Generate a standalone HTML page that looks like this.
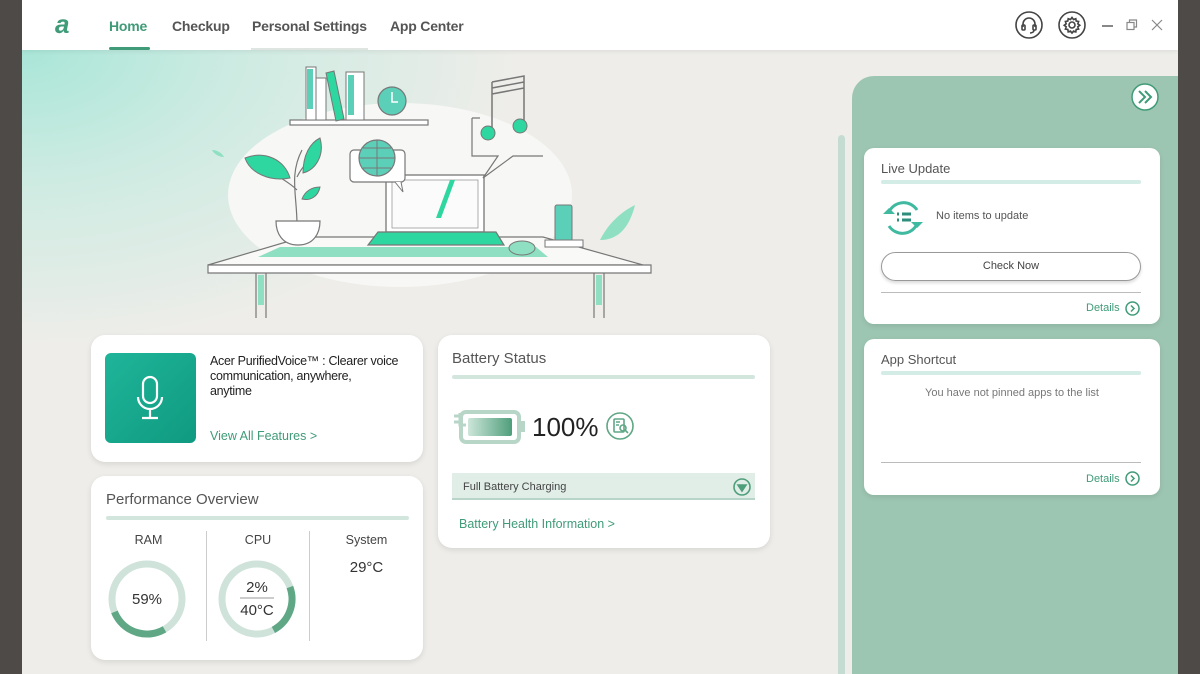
<!DOCTYPE html>
<html><head><meta charset="utf-8"><style>
*{box-sizing:border-box;margin:0;padding:0}
body{width:1200px;height:674px;overflow:hidden;background:#4e4a47;font-family:"Liberation Sans",sans-serif;position:relative}
.app{position:absolute;left:22px;top:0;width:1156px;height:674px;background:#eeede9;overflow:hidden}
.grad{position:absolute;left:0;top:50px;width:500px;height:300px;background:radial-gradient(ellipse at 0 0,#a9e6d8 0%,#cdebe2 30%,rgba(238,237,233,0) 70%)}
.hdr{position:absolute;left:0;top:0;width:1156px;height:50px;background:#fff;box-shadow:0 2px 4px rgba(0,0,0,.06)}
.nav{position:absolute;top:18px;font-size:14px;font-weight:bold;color:#555;letter-spacing:-0.2px}
.card{position:absolute;background:#fff;border-radius:14px;box-shadow:0 2px 6px rgba(0,0,0,.1)}
.ttl{font-size:15px;color:#555}
.bar{height:4px;background:#d3e6de;border-radius:2px}
.lnk{color:#3f9b78;font-size:12.5px}
.side{position:absolute;left:830px;top:76px;width:330px;height:610px;background:#9dc6b2;border-top-left-radius:22px}
</style></head><body>
<div class="app">
<div class="grad"></div>
<div class="hdr">
 <div style="position:absolute;left:33px;top:9px;font-size:26px;font-style:italic;font-weight:bold;color:#3f9b78">a</div>
 <div class="nav" style="left:87px;color:#3f9b78">Home</div>
 <div style="position:absolute;left:87px;top:47px;width:41px;height:3px;background:#3f9b78;border-radius:2px"></div>
 <div class="nav" style="left:150px">Checkup</div>
 <div class="nav" style="left:230px">Personal Settings</div>
 <div style="position:absolute;left:229px;top:48px;width:117px;height:2px;background:#dfe6e2"></div>
 <div class="nav" style="left:368px">App Center</div>
 <svg style="position:absolute;left:993px;top:11px" width="28" height="28" viewBox="0 0 28 28" fill="none" stroke="#444" stroke-width="1.6"><circle cx="14" cy="14" r="13"/><path d="M8 16v-3a6 6 0 0 1 12 0v3"/><rect x="7" y="14" width="3" height="5" rx="1"/><rect x="18" y="14" width="3" height="5" rx="1"/><path d="M19 19c0 2-2 3-4 3"/></svg>
 <svg style="position:absolute;left:1036px;top:11px" width="28" height="28" viewBox="0 0 28 28" fill="none" stroke="#444" stroke-width="1.6"><circle cx="14" cy="14" r="13"/><circle cx="14" cy="14" r="3"/><path d="M14 6.5l1.5 2 2.3-.8.4 2.4 2.4.4-.8 2.3 2 1.5-2 1.5.8 2.3-2.4.4-.4 2.4-2.3-.8-1.5 2-1.5-2-2.3.8-.4-2.4-2.4-.4.8-2.3-2-1.5 2-1.5-.8-2.3 2.4-.4.4-2.4 2.3.8z"/></svg>
 <div style="position:absolute;left:1080px;top:25px;width:11px;height:1.5px;background:#888"></div>
 <svg style="position:absolute;left:1104px;top:19px" width="12" height="12" fill="none" stroke="#888" stroke-width="1.2"><rect x="1" y="3.5" width="7" height="7"/><path d="M3.5 3.5V1h7v7H8"/></svg>
 <svg style="position:absolute;left:1129px;top:19px" width="12" height="12" stroke="#888" stroke-width="1.2"><path d="M1 1l10 10M11 1L1 11"/></svg>
</div>

<!-- illustration -->
<svg style="position:absolute;left:178px;top:55px" width="460" height="270" viewBox="0 0 460 270">
 <ellipse cx="200" cy="140" rx="172" ry="92" fill="#f7f7f5"/>
 <path d="M8 210l95-28h240l100 28z" fill="#f9f9f7" stroke="#777" stroke-width="1.2"/>
 <path d="M58 202h290l-12-10H80z" fill="#8fe0c3"/>
 <rect x="90" y="65" width="138" height="5" fill="#fff" stroke="#777" stroke-width="1.2"/>
 <rect x="106" y="12" width="10" height="53" fill="#fff" stroke="#777"/><rect x="107" y="14" width="6" height="40" fill="#5ccfb9"/>
 <rect x="116" y="23" width="10" height="42" fill="#fff" stroke="#777"/>
 <path d="M126 18l8-2 10 48-8 2z" fill="#2ed6a0" stroke="#777"/>
 <rect x="146" y="17" width="18" height="48" fill="#fff" stroke="#777"/><rect x="148" y="20" width="6" height="40" fill="#5ccfb9"/>
 <circle cx="192" cy="46" r="14" fill="#5ccfb9" stroke="#777" stroke-width="1.2"/><path d="M192 37v10h6" stroke="#fff" stroke-width="1.5" fill="none"/>
 <path d="M97 170c0-30-8-50 5-75M97 135c-10-10-30-20-40-25M97 122c5-10 10-15 15-18" stroke="#777" fill="none" stroke-width="1.2"/>
 <path d="M45 103c20-8 40 2 45 20-20 4-40-5-45-20z" fill="#2ed6a0" stroke="#777"/>
 <path d="M120 83c5 18-5 32-17 35 0-18 7-30 17-35z" fill="#2ed6a0" stroke="#777"/>
 <path d="M120 132c-2 10-10 14-18 12 3-8 10-12 18-12z" fill="#2ed6a0" stroke="#777"/>
 <path d="M76 166h44c0 12-6 24-22 24s-22-12-22-24z" fill="#fff" stroke="#777" stroke-width="1.2"/>
 <path d="M12 95c5 0 10 3 12 7-5 0-10-3-12-7z" fill="#8fe0c3"/>
 <rect x="186" y="120" width="98" height="57" fill="#fff" stroke="#777" stroke-width="1.3"/>
 <rect x="192" y="125" width="86" height="48" fill="#fbfbfb" stroke="#999" stroke-width=".8"/>
 <path d="M250 125l5 0-14 38-5 0z" fill="#2ed6a0"/>
 <path d="M178 177h118l8 13H168z" fill="#2ed6a0" stroke="#777" stroke-width="1.2"/>
 <rect x="150" y="95" width="55" height="32" rx="4" fill="#fff" stroke="#777" stroke-width="1.2"/>
 <path d="M195 127l8 10-2-10" fill="#fff" stroke="#777"/>
 <circle cx="177" cy="103" r="18" fill="#5ccfb9" stroke="#777" stroke-width="1.2"/>
 <path d="M159 103h36M177 85v36M163 93h28M163 113h28" stroke="#777" fill="none"/>
 <ellipse cx="322" cy="193" rx="13" ry="7" fill="#8fe0c3" stroke="#777"/>
 <path d="M272 63h8M272 63v38h26l-15 22 30-22h30" fill="none" stroke="#777" stroke-width="1.2"/>
 <path d="M292 27l32-6v48M292 27v50M292 33l32-6M292 39l32-6" stroke="#777" stroke-width="1.5" fill="none"/>
 <circle cx="288" cy="78" r="7" fill="#2ed6a0" stroke="#777"/><circle cx="320" cy="71" r="7" fill="#2ed6a0" stroke="#777"/>
 <rect x="355" y="150" width="17" height="40" rx="2" fill="#5ccfb9" stroke="#777"/>
 <rect x="345" y="185" width="38" height="7" fill="#fff" stroke="#777"/>
 <path d="M400 185c10-20 25-30 35-35-5 20-15 35-35 35z" fill="#8fe0c3"/>
 <path d="M8 210h443v8H8z" fill="#fff" stroke="#777" stroke-width="1.2"/>
 <path d="M56 218v45M66 218v45M394 218v45M404 218v45" stroke="#777" stroke-width="1.2"/>
 <rect x="58" y="220" width="6" height="30" fill="#8fe0c3"/><rect x="396" y="220" width="6" height="30" fill="#8fe0c3"/>
</svg>

<!-- voice card -->
<div class="card" style="left:69px;top:335px;width:332px;height:127px">
 <div style="position:absolute;left:14px;top:18px;width:91px;height:90px;border-radius:6px;background:linear-gradient(135deg,#1fb59a,#0f9a80)">
  <svg width="91" height="90" viewBox="0 0 91 90" fill="none" stroke="#fff" stroke-width="2.2"><rect x="38" y="24" width="14" height="26" rx="7"/><path d="M33 44a12 12 0 0 0 24 0M45 56v8M37 65h16"/></svg>
 </div>
 <div style="position:absolute;left:119px;top:19px;width:205px;font-size:12.5px;line-height:15px;color:#222;letter-spacing:-0.3px">Acer PurifiedVoice™ : Clearer voice<br>communication, anywhere,<br>anytime</div>
 <div class="lnk" style="position:absolute;left:119px;top:94px">View All Features &gt;</div>
</div>

<!-- perf card -->
<div class="card" style="left:69px;top:476px;width:332px;height:184px">
 <div class="ttl" style="position:absolute;left:15px;top:15px">Performance Overview</div>
 <div class="bar" style="position:absolute;left:15px;top:40px;width:303px"></div>
 <div style="position:absolute;left:115px;top:55px;width:1px;height:110px;background:#ccc"></div>
 <div style="position:absolute;left:218px;top:55px;width:1px;height:110px;background:#ccc"></div>
 <div style="position:absolute;left:0;top:57px;width:115px;text-align:center;font-size:12.5px;color:#444">RAM</div>
 <div style="position:absolute;left:116px;top:57px;width:102px;text-align:center;font-size:12.5px;color:#444">CPU</div>
 <div style="position:absolute;left:219px;top:57px;width:113px;text-align:center;font-size:12.5px;color:#444">System</div>
 <div style="position:absolute;left:219px;top:83px;width:113px;text-align:center;font-size:15px;color:#333">29°C</div>
 <svg style="position:absolute;left:15px;top:82px" width="82" height="82"><circle cx="41" cy="41" r="35" fill="none" stroke="#cfe3da" stroke-width="7"/><circle cx="41" cy="41" r="35" fill="none" stroke="#5fa785" stroke-width="7" stroke-dasharray="60 220" transform="rotate(60 41 41)"/><text x="41" y="46" text-anchor="middle" font-size="15" fill="#333" font-family="Liberation Sans">59%</text></svg>
 <svg style="position:absolute;left:125px;top:82px" width="82" height="82"><circle cx="41" cy="41" r="35" fill="none" stroke="#cfe3da" stroke-width="7"/><circle cx="41" cy="41" r="35" fill="none" stroke="#5fa785" stroke-width="7" stroke-dasharray="50 220" transform="rotate(-20 41 41)"/><text x="41" y="34" text-anchor="middle" font-size="15" fill="#333" font-family="Liberation Sans">2%</text><line x1="24" y1="40" x2="58" y2="40" stroke="#999"/><text x="41" y="57" text-anchor="middle" font-size="15" fill="#333" font-family="Liberation Sans">40°C</text></svg>
</div>

<!-- battery card -->
<div class="card" style="left:416px;top:335px;width:332px;height:213px">
 <div class="ttl" style="position:absolute;left:14px;top:15px">Battery Status</div>
 <div class="bar" style="position:absolute;left:14px;top:40px;width:303px"></div>
 <svg style="position:absolute;left:14px;top:73px" width="76" height="38"><path d="M2 8h6M2 14h6M8 5v12h6" stroke="#b7d6c8" stroke-width="3" fill="none"/><rect x="9" y="4" width="58" height="30" rx="5" fill="none" stroke="#b7d6c8" stroke-width="4"/><rect x="16" y="10" width="44" height="18" rx="2" fill="url(#bg)"/><rect x="68" y="13" width="5" height="11" fill="#b7d6c8"/><defs><linearGradient id="bg"><stop offset="0" stop-color="#cde6da"/><stop offset="1" stop-color="#4f9e7b"/></linearGradient></defs></svg>
 <div style="position:absolute;left:94px;top:77px;font-size:26px;color:#222">100%</div>
 <svg style="position:absolute;left:168px;top:77px" width="28" height="28" fill="none" stroke="#5fa785" stroke-width="1.6"><circle cx="14" cy="14" r="13"/><rect x="8" y="7" width="10" height="13" rx="1"/><circle cx="17" cy="16" r="3"/><path d="M19 18l3 3M10 10h4M10 13h3"/></svg>
 <div style="position:absolute;left:14px;top:138px;width:303px;height:27px;background:#e1eee8;border-bottom:2px solid #b9d4c8">
  <span style="position:absolute;left:11px;top:8px;font-size:11px;color:#444">Full Battery Charging</span>
  <svg style="position:absolute;right:4px;top:5px" width="18" height="18" fill="none" stroke="#4f9e7b" stroke-width="1.6"><circle cx="9" cy="9" r="8"/><path d="M5 7h8l-4 6z" fill="#4f9e7b"/></svg>
 </div>
 <div class="lnk" style="position:absolute;left:21px;top:182px">Battery Health Information &gt;</div>
</div>

<div style="position:absolute;left:816px;top:135px;width:7px;height:545px;background:#c5dcd2;border-radius:4px"></div>

<div class="side">
 <svg style="position:absolute;left:278px;top:6px" width="30" height="30" fill="none" stroke="#3f9b78" stroke-width="2"><circle cx="15" cy="15" r="13" fill="#fff" stroke="#3f9b78" stroke-width="1.5"/><path d="M9 9l6 6-6 6M15 9l6 6-6 6"/></svg>
</div>

<div class="card" style="left:842px;top:148px;width:296px;height:176px;border-radius:10px">
 <div class="ttl" style="position:absolute;left:17px;top:13px;font-size:13px">Live Update</div>
 <div class="bar" style="position:absolute;left:17px;top:32px;width:260px;background:#d3ece5"></div>
 <svg style="position:absolute;left:17px;top:50px" width="44" height="40" fill="none" stroke="#3fb9a0" stroke-width="3"><path d="M8 14a16 16 0 0 1 28-2M36 26a16 16 0 0 1-28 2"/><path d="M2 16l6-6 6 6z M30 24l6 6 6-6z" fill="#3fb9a0" stroke="none"/><path d="M16 16h2M21 16h9M16 22h2M21 22h9" stroke="#2d8f7b"/></svg>
 <div style="position:absolute;left:72px;top:62px;font-size:11px;color:#555">No items to update</div>
 <div style="position:absolute;left:17px;top:104px;width:260px;height:29px;border:1px solid #999;border-radius:15px;box-shadow:0 2px 3px rgba(0,0,0,.15);text-align:center;line-height:27px;font-size:11px;color:#444">Check Now</div>
 <div style="position:absolute;left:17px;top:144px;width:260px;height:1px;background:#bbb"></div>
 <div class="lnk" style="position:absolute;left:222px;top:154px;font-size:11px">Details</div>
 <svg style="position:absolute;left:261px;top:153px" width="15" height="15" fill="none" stroke="#3f9b78" stroke-width="1.5"><circle cx="7.5" cy="7.5" r="6.5"/><path d="M6 4.5l3 3-3 3"/></svg>
</div>

<div class="card" style="left:842px;top:339px;width:296px;height:156px;border-radius:10px">
 <div class="ttl" style="position:absolute;left:17px;top:13px;font-size:13px">App Shortcut</div>
 <div class="bar" style="position:absolute;left:17px;top:32px;width:260px;background:#d3ece5"></div>
 <div style="position:absolute;left:0;top:48px;width:296px;text-align:center;font-size:11px;color:#777">You have not pinned apps to the list</div>
 <div style="position:absolute;left:17px;top:123px;width:260px;height:1px;background:#bbb"></div>
 <div class="lnk" style="position:absolute;left:222px;top:134px;font-size:11px">Details</div>
 <svg style="position:absolute;left:261px;top:132px" width="15" height="15" fill="none" stroke="#3f9b78" stroke-width="1.5"><circle cx="7.5" cy="7.5" r="6.5"/><path d="M6 4.5l3 3-3 3"/></svg>
</div>
</div>
</body></html>
